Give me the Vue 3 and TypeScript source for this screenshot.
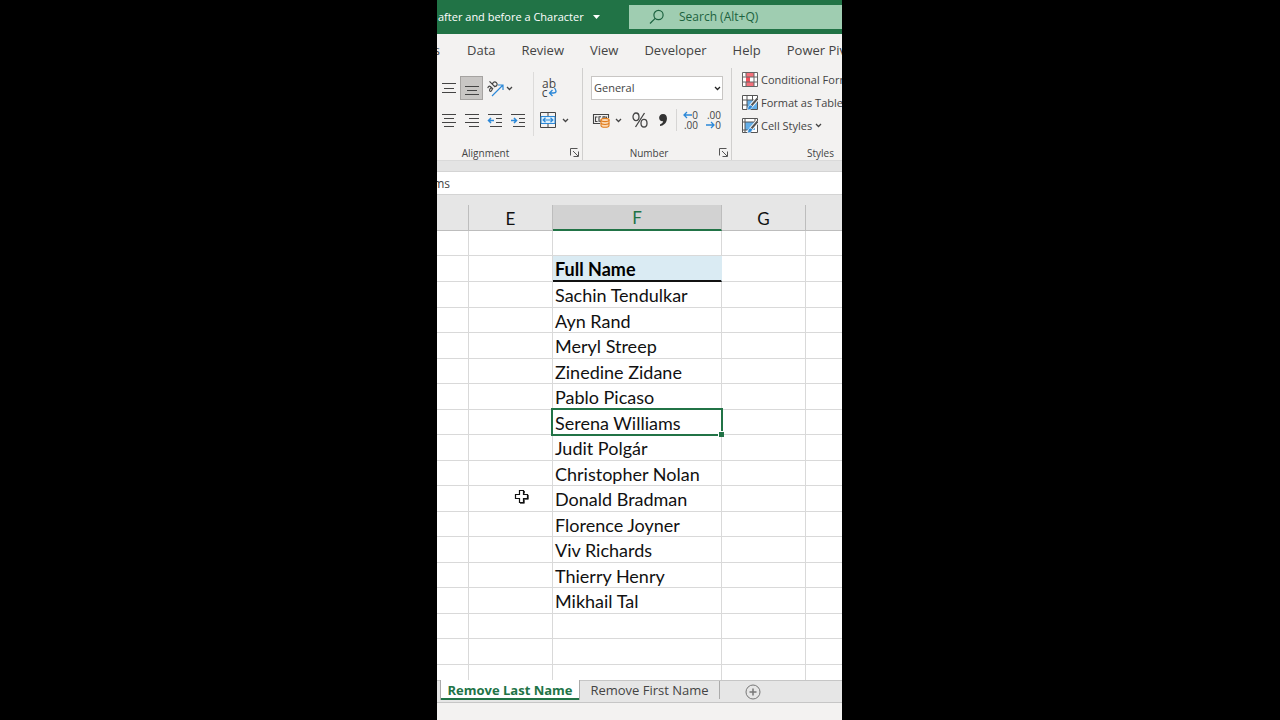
<script setup lang="ts">
import { ref } from 'vue'

const tabs: string[] = ['Data', 'Review', 'View', 'Developer', 'Help', 'Power Pivot']
const names: string[] = [
  'Sachin Tendulkar', 'Ayn Rand', 'Meryl Streep', 'Zinedine Zidane', 'Pablo Picaso',
  'Serena Williams', 'Judit Polgár', 'Christopher Nolan', 'Donald Bradman',
  'Florence Joyner', 'Viv Richards', 'Thierry Henry', 'Mikhail Tal',
]
const rows: string[] = ['', 'Full Name', ...names, '', '', '']
const selected = ref('Serena Williams')
const hovered = 'Donald Bradman'
const format = ref('General')
const query = ref('')
</script>

<template>
  <div class="stage">
    <main class="excel">
      <header class="titlebar">
        <button class="doc">after and before a Character
          <svg width="7" height="4" viewBox="0 0 7 4"><path d="M0 0h7L3.500 4z" fill="#fff" /></svg>
        </button>
        <label class="search">
          <svg width="16" height="16" viewBox="0 0 16 16" fill="none" stroke="#1d6340" stroke-width="1.200"><circle cx="9.500" cy="6" r="4.600" /><path d="M6.200 9.300L1 14.500" /></svg>
          <input v-model="query" type="text" placeholder="Search (Alt+Q)" aria-label="Search">
        </label>
      </header>

      <nav class="tabs">
        <span class="clip"><button>Formulas</button></span>
        <button v-for="t in tabs" :key="t">{{ t }}</button>
      </nav>

      <section class="ribbon">
        <div class="group alignment">
          <div class="tools">
            <div class="left">
              <div class="line">
                <button class="ib" aria-label="Middle align"><svg width="16" height="16" viewBox="0 0 16 16" stroke="#444" stroke-width="1.200"><path d="M1 3.500h14M3 8.500h10M1 12.500h14" /></svg></button>
                <button class="ib on" aria-label="Bottom align"><svg width="16" height="16" viewBox="0 0 16 16" stroke="#444" stroke-width="1.200"><path d="M1 6.500h14M3 10.500h10M1 14.500h14" /></svg></button>
                <button class="ib wide turn" aria-label="Orientation">
                  <svg width="18" height="18" viewBox="0 0 18 18" fill="none" stroke="#444" stroke-width="1.200"><g transform="rotate(-45 6 7)"><path d="M1.500 5.500q3-1.500 3 1v3.500M4.500 7.500c-4-.5-4.500 2.500-2.300 2.500q1.800 0 2.300-1.500M7.500 2v8M7.500 6.500c1-1.800 4-1.500 4 1.200s-3 3-4 1" /></g><path d="M6 17L16.500 6.500M12 6h5v5" stroke="#2b88d8" /></svg>
                  <svg class="chev" width="7" height="5" viewBox="0 0 7 5"><path d="M1 1l2.500 2.500L6 1" /></svg>
                </button>
              </div>
              <div class="line">
                <button class="ib" aria-label="Center"><svg width="16" height="16" viewBox="0 0 16 16" stroke="#444" stroke-width="1.200"><path d="M1 2.500h14M3 6.500h10M1 10.500h14M3 14.500h10" /></svg></button>
                <button class="ib" aria-label="Align right"><svg width="16" height="16" viewBox="0 0 16 16" stroke="#444" stroke-width="1.200"><path d="M1 2.500h14M5 6.500h10M1 10.500h14M5 14.500h10" /></svg></button>
                <button class="ib" aria-label="Decrease indent"><svg width="16" height="16" viewBox="0 0 16 16" fill="none" stroke="#444" stroke-width="1.200"><path d="M1 2.500h14M9 6.500h6M9 10.500h6M3 14.500h12" /><path d="M7 8.500H1.500M4 6L1.500 8.500L4 11" stroke="#2b88d8" stroke-width="1.500" /></svg></button>
                <button class="ib" aria-label="Increase indent"><svg width="16" height="16" viewBox="0 0 16 16" fill="none" stroke="#444" stroke-width="1.200"><path d="M1 2.500h14M9 6.500h6M9 10.500h6M3 14.500h12" /><path d="M1 8.500h5.500M4 6l2.500 2.500L4 11" stroke="#2b88d8" stroke-width="1.500" /></svg></button>
              </div>
            </div>
            <div class="right">
              <div class="line">
                <button class="ib wrap" aria-label="Wrap text"><span>ab</span><span>c</span>
                  <svg width="9" height="9" viewBox="0 0 9 9" fill="none" stroke="#2b88d8" stroke-width="1.300"><path d="M6.500 0q3.500 5-1 5H1.500M4.500 2L1.500 5l3 3" /></svg>
                </button>
              </div>
              <div class="line">
                <button class="ib wide" aria-label="Merge and center">
                  <svg width="16" height="16" viewBox="0 0 16 16" fill="none" stroke="#444"><path d="M.5.5h15v15H.5zM8 .5v4M8 11.500v4" /><path d="M1 4.500h14v7H1z" fill="#dff0fb" stroke="#2b88d8" /><path d="M3 8h10M5.500 5.800L3.200 8l2.300 2.200M10.500 5.800L12.800 8l-2.300 2.200" stroke="#2b88d8" stroke-width="1.200" /></svg>
                  <svg class="chev" width="7" height="5" viewBox="0 0 7 5"><path d="M1 1l2.500 2.500L6 1" /></svg>
                </button>
              </div>
            </div>
          </div>
          <footer>Alignment
            <button class="launch" aria-label="Alignment settings"><svg width="9" height="9" viewBox="0 0 9 9"><path d="M.5 7.500v-7h7M3 3l5 5M8.500 3.500v5h-5" /></svg></button>
          </footer>
        </div>

        <div class="group number">
          <div class="line">
            <label class="format">
              <select v-model="format" aria-label="Number format"><option>General</option><option>Currency</option><option>Text</option></select>
              <svg class="chev" width="7" height="5" viewBox="0 0 7 5"><path d="M1 1l2.500 2.500L6 1" /></svg>
            </label>
          </div>
          <div class="line numbers">
            <button class="ib money" aria-label="Accounting format">
              <svg width="18" height="16" viewBox="0 0 18 16" fill="none" stroke="#444" stroke-width="1.100"><path d="M8 11.500H1.500v-9h15V6M5.500 5H3.500v4.500h2M9 4.800H7v4.500h2M11 7V4.800h2V6M14.500 4.500V6" /><g fill="#fbd9b5" stroke="#e07b1a"><path d="M9 8v5.500c0 2.400 8 2.400 8 0V8z" /><ellipse cx="13" cy="8" rx="4" ry="1.600" /><path d="M9 10.800c0 2.200 8 2.200 8 0" /></g></svg>
              <svg class="chev" width="7" height="5" viewBox="0 0 7 5"><path d="M1 1l2.500 2.500L6 1" /></svg>
            </button>
            <button class="ib pct" aria-label="Percent style"><svg width="16" height="16" viewBox="0 0 16 16" fill="none" stroke="#444" stroke-width="1.300"><ellipse cx="4" cy="4.800" rx="3" ry="3.800" /><ellipse cx="12" cy="11.200" rx="3" ry="3.800" /><path d="M12.500 1L3.500 15" /></svg></button>
            <button class="ib" aria-label="Comma style"><svg width="10" height="14" viewBox="0 0 10 14"><path d="M5 1c5 0 5 7 1.500 10Q4.500 12.800 2 13v-1.500q3-.8 3.200-3.200C-.2 9-.2 1 5 1z" fill="#333" /></svg></button>
            <span class="sep" />
            <button class="dec" aria-label="Increase decimal"><span><svg width="9" height="8" viewBox="0 0 9 8"><path d="M9 4H1M4 1L1 4l3 3" /></svg>0</span><span>.00</span></button>
            <button class="dec" aria-label="Decrease decimal"><span>.00</span><span><svg width="9" height="8" viewBox="0 0 9 8"><path d="M0 4h8M5 1l3 3-3 3" /></svg>0</span></button>
          </div>
          <footer>Number
            <button class="launch" aria-label="Number settings"><svg width="9" height="9" viewBox="0 0 9 9"><path d="M.5 7.500v-7h7M3 3l5 5M8.500 3.500v5h-5" /></svg></button>
          </footer>
        </div>

        <div class="group styles">
          <button class="style"><svg width="16" height="16" viewBox="0 0 16 16"><path d="M.5.5h15v14H.5z" fill="#fff" /><path d="M4 1h8v4H4zM4 10h8v4H4z" fill="#f4707a" /><path d="M4 5h4v5H4z" fill="#f0505c" /><path d="M8 6h3v3H8z" fill="#fff" /><path d="M.5.500h15v14H.5zM4 .5v4M4 10v4M12 .5v14M.5 5h15M.5 10h15" fill="none" stroke="#666" /></svg>Conditional Formatting</button>
          <button class="style"><svg width="16" height="16" viewBox="0 0 16 16"><path d="M.5.5h15v14H.5z" fill="#fff" /><path d="M5 5h10v9H5z" fill="#63aee8" /><path d="M.5.500h15v14H.5zM5 .5v14M10.500 .5v5M.5 5h15M.5 10h5" fill="none" stroke="#555" /><path d="M15.500 3.500L9 11" stroke="#fff" stroke-width="4" /><path d="M15.500 3.500L9 11" stroke="#555" stroke-width="2" /><path d="M9 10q-3 0-3.500 5q4.500 0 5-3.500z" fill="#2b88d8" stroke="#fff" stroke-width=".6" /></svg>Format as Table</button>
          <button class="style"><svg width="16" height="16" viewBox="0 0 16 16"><path d="M.5.5h15v14H.5z" fill="#fff" /><path d="M3 4h10v8H3z" fill="#63aee8" /><path d="M.5.500h15v14H.5zM3 .5v14M.5 4h15M13 .5v4M.5 12h5" fill="none" stroke="#555" /><path d="M15.500 3.500L9 11" stroke="#fff" stroke-width="4" /><path d="M15.500 3.500L9 11" stroke="#555" stroke-width="2" /><path d="M9 10q-3 0-3.500 5q4.500 0 5-3.500z" fill="#2b88d8" stroke="#fff" stroke-width=".6" /></svg>Cell Styles <svg class="chev" width="7" height="5" viewBox="0 0 7 5"><path d="M1 1l2.500 2.500L6 1" /></svg></button>
          <footer>Styles</footer>
        </div>
      </section>

      <div class="formula"><div class="visible"><input v-model="selected" type="text" aria-label="Formula bar"></div></div>

      <section class="sheet">
        <table>
          <colgroup><col class="c-d"><col class="c-e"><col class="c-f"><col class="c-e"><col></colgroup>
          <thead><tr><th /><th>E</th><th class="active">F</th><th>G</th><th /></tr></thead>
          <tbody>
            <tr v-for="(r, i) in rows" :key="i">
              <td />
              <td><svg v-if="r === hovered" class="cursor" width="15" height="15" viewBox="0 0 15 15"><path d="M5.500 1.500h4v4h4v4h-4v4h-4v-4h-4v-4h4z" fill="#fff" stroke="#111" stroke-width="1.200" /><path d="M10.500 2v2.500M14.300 6v4.300H10.300v4H6" fill="none" stroke="#111" stroke-width=".8" /></svg></td>
              <td :class="{ head: i === 1 }">{{ r }}<i v-if="r === selected" class="box" /></td>
              <td /><td />
            </tr>
          </tbody>
        </table>
      </section>

      <nav class="sheets">
        <button class="current">Remove Last Name</button>
        <button class="other">Remove First Name</button>
        <button class="add" aria-label="New sheet"><svg width="16" height="16" viewBox="0 0 16 16" fill="none" stroke="#777"><circle cx="8" cy="8" r="7" /><path d="M8 4.500v7M4.500 8h7" stroke-width="1.500" /></svg></button>
      </nav>
      <div class="status" />
    </main>
  </div>
</template>

<style>
body { margin: 0; background: #000; }
</style>

<style scoped>
* { box-sizing: border-box; }
.stage { display: flex; justify-content: center; height: 100vh; padding-right: 1px; background: #000; }
.excel { display: flex; flex-direction: column; height: 100%; aspect-ratio: 9 / 16; overflow: hidden; background: #f3f2f1; color: #444; font: 12px/16px "Open Sans", "Noto Sans", sans-serif; }
button, input, select { font: inherit; color: inherit; border: 0; padding: 0; margin: 0; background: none; border-radius: 0; outline: 0; }
button { white-space: nowrap; flex: none; }
svg { display: block; flex: none; }
.chev { fill: none; stroke: #444; stroke-width: 1.3; }
.line { display: flex; align-items: center; flex: none; height: 32px; }

.titlebar { display: flex; align-items: center; flex: none; height: 34px; background: #217346; color: #fff; }
.doc { display: flex; align-items: center; gap: 9px; width: 192px; padding-left: 1px; font-size: 11px; }
.search { display: flex; align-items: center; flex: 1; min-width: 0; gap: 14px; height: 24px; padding-left: 20px; background: #9fcdb1; color: #1d6340; }
.search input { flex: 1; min-width: 0; }
.search input::placeholder { color: #1d6340; opacity: 1; }

.tabs { display: flex; align-items: center; flex: none; gap: 26px; height: 34px; padding-bottom: 2px; font-size: 13px; }
.clip { display: flex; justify-content: flex-end; flex: none; width: 3px; margin-right: 1px; overflow: hidden; }

.ribbon { display: flex; flex: none; height: 93px; border-bottom: 1px solid #dadada; font-size: 11px; }
.group { display: flex; flex-direction: column; flex: none; height: 92px; padding-top: 4px; border-right: 1px solid #d0cfce; }
.group footer { position: relative; flex: none; padding-top: 9px; text-align: center; font-size: 10px; line-height: 16px; }
.launch { position: absolute; right: 3px; top: 12px; }
.launch svg { fill: none; stroke: #555; }
.alignment { width: 146px; }
.alignment footer { padding-right: 48px; }
.tools { display: flex; }
.left { width: 97px; border-right: 1px solid #dcdbda; }
.right { padding-left: 3px; }
.ib { display: flex; align-items: center; justify-content: center; width: 23px; height: 24px; }
.ib.on { background: #c8c6c4; border: 1px solid #a5a3a1; }
.ib.wide { width: auto; gap: 6px; padding-left: 3px; }
.ib.turn { gap: 2px; }
.ib.wrap { display: grid; grid-template-columns: 6px 9px; align-content: center; width: 24px; font-size: 12px; line-height: 9px; }
.ib.wrap span:first-child { grid-column: 1 / 3; }

.number { width: 149px; padding-left: 8px; }
.number footer { padding-right: 24px; }
.format { display: grid; align-items: center; width: 132px; }
.format select { grid-area: 1 / 1; height: 24px; padding-left: 2px; appearance: none; background: #fff; border: 1px solid #c8c6c4; }
.format .chev { grid-area: 1 / 1; justify-self: end; margin-right: 2px; stroke: #222; pointer-events: none; }
.ib.money { width: 36px; gap: 5px; justify-content: flex-start; padding-left: 1px; margin-right: 1px; }
.sep { width: 1px; height: 22px; margin: 0 3px 0 2px; background: #d6d5d4; }
.dec { display: grid; width: 23px; font-size: 10px; line-height: 10px; text-align: right; padding-right: 5px; }
.dec span { display: flex; align-items: center; justify-content: flex-end; }
.dec svg { fill: none; stroke: #2b88d8; stroke-width: 1.3; }

.styles { width: 167px; padding: 0 0 0 10px; border: 0; }
.style { display: flex; align-items: center; gap: 3px; height: 23px; }
.styles footer { padding-top: 8px; }

.formula { flex: none; height: 34px; background: #e6e6e6; border-top: 10px solid #e4e4e4; }
.visible { display: flex; justify-content: flex-end; height: 24px; padding-right: calc(100% - 13px); overflow: hidden; background: #fff; border: solid #d4d4d4; border-width: 1px 0; }
.visible input { flex: none; width: 110px; padding-top: 2px; text-align: right; }

.sheet { flex: 1; min-height: 0; overflow: hidden; padding-top: 10px; background: linear-gradient(#e6e6e6 12px, #fff 12px); }
table { width: 100%; table-layout: fixed; border-collapse: separate; border-spacing: 0; color: #111; font: 18px/22px Lato, "Noto Sans", sans-serif; }
.c-d { width: 32px; }
.c-e { width: 84px; }
.c-f { width: 169px; }
th { height: 26px; padding: 2px 0 0; background: #e6e6e6; border: solid #bdbdbd; border-width: 0 1px 1px 0; font-weight: 400; font-size: 17px; }
th.active { background: #d2d2d2; color: #217346; border-bottom: 2px solid #217346; }
td { position: relative; height: 25px; padding: 1px 0 0 2px; border: solid #d9d9d9; border-width: 0 1px 1px 0; white-space: nowrap; }
th:last-child, td:last-child { border-right: 0; }
tr:nth-child(2) td, tbody tr:nth-child(odd):not(:first-child) td { height: 26px; }
td.head { padding-top: 2px; background: #daebf3; border-bottom: 2px solid #111; border-right-color: #daebf3; font-weight: 700; color: #000; }
.box { position: absolute; inset: -2px; border: 2px solid #217346; z-index: 1; }
.box::after { content: ""; position: absolute; right: -3px; bottom: -3px; width: 5px; height: 5px; background: #217346; border: solid #fff; border-width: 1px 0 0 1px; }
.cursor { position: absolute; left: 45px; top: 3px; }

.sheets { display: flex; flex: none; height: 23px; background: #e6e6e6; border: solid #c6c6c6; border-width: 1px 0; padding-left: 3px; font-size: 13px; }
.current { width: 140px; height: 20px; margin-top: -1px; background: #fff; color: #217346; font-weight: 700; border: solid #ababab; border-width: 0 1px; box-shadow: inset 0 -2px #217346; }
.other { width: 140px; height: 18px; border-right: 1px solid #ababab; }
.add { margin-left: 25px; }
.status { flex: none; height: 17px; background: #f3f2f1; }
</style>
